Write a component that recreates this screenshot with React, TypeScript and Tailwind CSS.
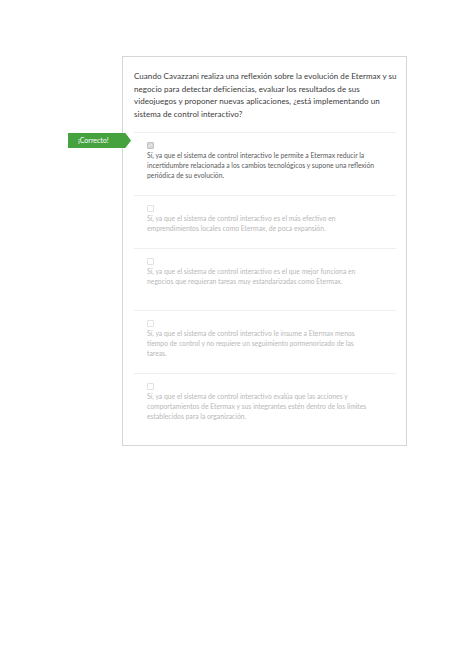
import React from "react";

const answers = [
  {
    text: "Sí, ya que el sistema de control interactivo le permite a Etermax reducir la incertidumbre relacionada a los cambios tecnológicos y supone una reflexión periódica de su evolución.",
    selected: true,
    width: "w-[230px]",
  },
  {
    text: "Sí, ya que el sistema de control interactivo es el más efectivo en emprendimientos locales como Etermax, de poca expansión.",
    selected: false,
    width: "w-[230px]",
  },
  {
    text: "Sí, ya que el sistema de control interactivo es el que mejor funciona en negocios que requieran tareas muy estandarizadas como Etermax.",
    selected: false,
    pageBreak: true,
    width: "w-[230px]",
  },
  {
    text: "Sí, ya que el sistema de control interactivo le insume a Etermax menos tiempo de control y no requiere un seguimiento pormenorizado de las tareas.",
    selected: false,
    width: "w-[220px]",
  },
  {
    text: "Sí, ya que el sistema de control interactivo evalúa que las acciones y comportamientos de Etermax y sus integrantes estén dentro de los límites establecidos para la organización.",
    selected: false,
    width: "w-[230px]",
  },
];

function Checkbox({ checked }: { checked: boolean }) {
  return (
    <div
      className={`w-[7px] h-[7px] rounded-[1px] border flex items-center justify-center ${
        checked ? "border-[#c4c4c4] bg-[#d8d8d8]" : "border-[#e2e2e2] bg-white"
      }`}
    >
      {checked && (
        <svg viewBox="0 0 10 10" className="w-[6px] h-[6px]">
          <path d="M2 5.2 L4.2 7.3 L8 2.8" fill="none" stroke="#f4f4f4" strokeWidth="1.6" />
        </svg>
      )}
    </div>
  );
}

export default function App() {
  return (
    <div
      className="w-[474px] h-[670px] bg-white pt-[56px] pl-[122px]"
      style={{ fontFamily: "Lato, 'Noto Sans', sans-serif" }}
    >
      <div className="relative w-[285px] h-[390px] border border-[#d6d6d6] bg-white pl-[11px] pr-[10px] pt-[13px]">
        {/* ¡Correcto! badge */}
        <div className="absolute left-[-55px] top-[76px] w-[63px] h-[15px] bg-[#46a23f] [clip-path:polygon(0_0,91%_0,100%_50%,91%_100%,0_100%)] flex items-center pl-[10px]">
          <span className="text-[7px] text-white leading-none">¡Correcto!</span>
        </div>

        <p className="w-[263px] text-[8px] tracking-[0.05px] leading-[12.7px] text-[#3a3a3a] pb-[11px]">
          Cuando Cavazzani realiza una reflexión sobre la evolución de Etermax y su negocio para detectar deficiencias,
          evaluar los resultados de sus videojuegos y proponer nuevas aplicaciones, ¿está implementando un sistema de
          control interactivo?
        </p>

        <div className="flex flex-col">
          {answers.map((a, i) => (
            <div
              key={i}
              className={`border-t border-[#efefef] pl-[13px] pt-[9px] ${a.pageBreak ? "pb-[24px]" : "pb-[15px]"}`}
            >
              <Checkbox checked={a.selected} />
              <p
                className={`${a.width} text-[6.8px] leading-[10px] mt-[1px] ${
                  a.selected ? "text-[#5a5a5a]" : "text-[#b8b8b8]"
                }`}
              >
                {a.text}
              </p>
            </div>
          ))}
        </div>
      </div>
    </div>
  );
}
